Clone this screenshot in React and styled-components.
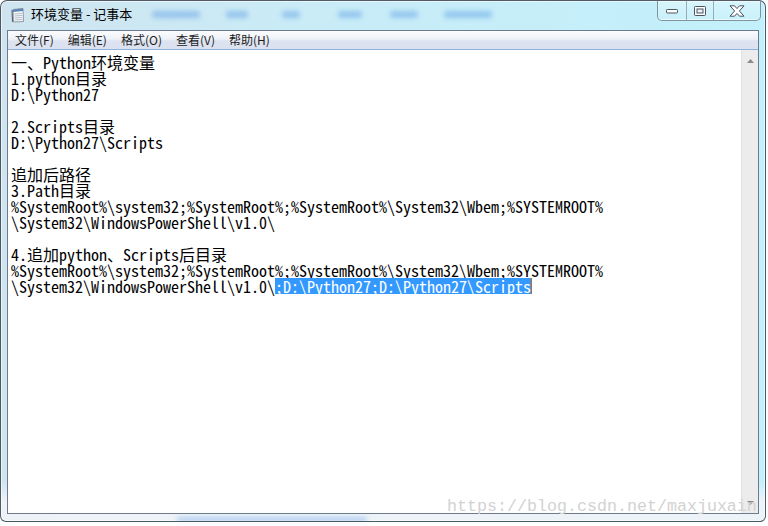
import React from 'react';
import styled, { createGlobalStyle } from 'styled-components';

const GlobalStyle = createGlobalStyle`
  html, body {
    margin: 0;
    padding: 0;
    background: #ffffff;
  }
  body {
    width: 768px;
    height: 526px;
    overflow: hidden;
  }
`;

const Page = styled.div`
  position: relative;
  width: 768px;
  height: 526px;
  background: #ffffff;
`;

const Window = styled.div`
  width: 766px;
  height: 522px;
  box-sizing: border-box;
  border: 1px solid rgba(38, 48, 60, 0.78);
  border-radius: 7px 7px 6px 6px;
  background:
    linear-gradient(to bottom, rgba(255,255,255,0) 0, rgba(255,255,255,0) 480px, rgba(240,244,248,0.9) 500px),
    linear-gradient(to right, #cfe4ef 0%, #c9ecf7 40%, #c2f0fb 100%);
  box-shadow: inset 0 0 0 1px rgba(255, 255, 255, 0.55);
  display: flex;
  flex-direction: column;
  overflow: hidden;
`;

const TitleBar = styled.div`
  height: 29px;
  display: flex;
  align-items: flex-start;
  padding-left: 9px;
  flex-shrink: 0;
`;

const AppIcon = styled.svg`
  margin-top: 6px;
  flex-shrink: 0;
`;

const Title = styled.div`
  margin-left: 5px;
  line-height: 26px;
  font-family: "Noto Sans CJK SC", "Noto Sans", sans-serif;
  font-size: 13px;
  color: #000000;
  white-space: pre;
`;

const Blurs = styled.div`
  display: flex;
  align-items: center;
  height: 27px;
  margin-left: 20px;
`;

const Blob = styled.div`
  width: ${p => p.w}px;
  margin-left: ${p => p.gap}px;
  height: ${p => p.h || 7}px;
  border-radius: 3px;
  background: rgba(70, 140, 225, ${p => p.alpha || 0.4});
  filter: blur(2.5px);
  flex-shrink: 0;
`;

const Captions = styled.div`
  margin-left: auto;
  margin-right: 4px;
  display: flex;
  height: 19px;
  border: 1px solid rgba(60, 70, 82, 0.55);
  border-top: none;
  border-radius: 0 0 5px 5px;
  overflow: hidden;
  background: linear-gradient(to bottom, rgba(255,255,255,0.35), rgba(255,255,255,0.1));
  box-shadow: inset 0 -1px 0 rgba(255,255,255,0.6);
`;

const CapButton = styled.div`
  width: ${p => p.w}px;
  height: 19px;
  display: flex;
  align-items: center;
  justify-content: center;
  border-left: ${p => (p.first ? 'none' : '1px solid rgba(60, 70, 82, 0.4)')};
`;

const Client = styled.div`
  flex: 1;
  margin: 0 6px;
  border: 1px solid #6c7b8e;
  display: flex;
  flex-direction: column;
  min-height: 0;
`;

const BottomFrame = styled.div`
  height: 7px;
  flex-shrink: 0;
  display: flex;
  align-items: flex-end;
`;

const MenuBar = styled.div`
  height: 18px;
  flex-shrink: 0;
  display: flex;
  align-items: center;
  background: linear-gradient(to bottom, #fbfcfe 0%, #eef1f8 45%, #dde3f0 55%, #dbe1ee 100%);
  font-family: "Noto Sans CJK SC", "Noto Sans", sans-serif;
  font-size: 12px;
  color: #1e1e1e;
`;

const MenuItem = styled.div`
  padding: 0 7px;
  line-height: 18px;
  white-space: pre;
`;

const EditArea = styled.div`
  flex: 1;
  display: flex;
  border-top: 1px solid #8fb3de;
  min-height: 0;
`;

const TextPane = styled.div`
  flex: 1;
  background: #ffffff;
  padding: 4px 3px;
  font-family: "Noto Sans Mono CJK SC", "Liberation Mono", "Noto Sans CJK SC", monospace;
  font-size: 16px;
  line-height: 16px;
  color: #000000;
  white-space: pre;
  overflow: hidden;
`;

const Line = styled.div`
  height: 16px;
  line-height: 16px;
`;

const Selection = styled.span`
  display: inline-block;
  height: 16px;
  line-height: 16px;
  vertical-align: top;
  background: #3399ff;
  color: #ffffff;
  box-shadow: 1px 0 0 #c26a1c;
`;

const ScrollBar = styled.div`
  width: 17px;
  flex-shrink: 0;
  background: #ececec;
  border-left: 1px solid #e2e2e2;
  box-sizing: border-box;
  display: flex;
  flex-direction: column;
  justify-content: space-between;
`;

const Arrow = styled.div`
  height: ${p => p.h}px;
  display: flex;
  align-items: center;
  justify-content: center;
`;

const Watermark = styled.div`
  position: absolute;
  left: 447px;
  top: 497px;
  font-family: "Liberation Mono", "DejaVu Sans Mono", monospace;
  font-size: 16.67px;
  line-height: 20px;
  color: #d2d2d2;
  white-space: pre;
`;

const lines = [
  '一、Python环境变量',
  '1.python目录',
  'D:\\Python27',
  '',
  '2.Scripts目录',
  'D:\\Python27\\Scripts',
  '',
  '追加后路径',
  '3.Path目录',
  '%SystemRoot%\\system32;%SystemRoot%;%SystemRoot%\\System32\\Wbem;%SYSTEMROOT%',
  '\\System32\\WindowsPowerShell\\v1.0\\',
  '',
  '4.追加python、Scripts后目录',
  '%SystemRoot%\\system32;%SystemRoot%;%SystemRoot%\\System32\\Wbem;%SYSTEMROOT%',
];

const blobs = [
  { gap: 0, w: 48 },
  { gap: 26, w: 22 },
  { gap: 34, w: 18 },
  { gap: 38, w: 24 },
  { gap: 28, w: 28 },
  { gap: 26, w: 48 },
];

function NotepadIcon() {
  return (
    <AppIcon width="16" height="16" viewBox="0 0 16 16">
      <path d="M3 2.5 L13 1.5 L13.5 14.5 L3.5 15 Z" fill="#f4f6f8" stroke="#7a8594" strokeWidth="0.8" />
      <path d="M3 2.5 L13 1.5 L13.1 4 L3.1 5 Z" fill="#5b86b8" />
      <path d="M4.5 7 L12 6.4 M4.6 9 L12.1 8.4 M4.7 11 L12.2 10.4 M4.8 13 L12.3 12.4" stroke="#9aa7b6" strokeWidth="0.7" />
      <path d="M2 3 L2.5 14.8" stroke="#4a5563" strokeWidth="1" />
    </AppIcon>
  );
}

function App() {
  return (
    <>
      <GlobalStyle />
      <Page>
        <Window>
          <TitleBar>
            <NotepadIcon />
            <Title>环境变量 - 记事本</Title>
            <Blurs>
              {blobs.map((b, i) => (
                <Blob key={i} w={b.w} gap={i === 0 ? 0 : b.gap} />
              ))}
            </Blurs>
            <Captions>
              <CapButton w={28} first>
                <svg width="12" height="6" viewBox="0 0 12 6">
                  <rect x="0.5" y="1.5" width="11" height="3.5" rx="0.8" fill="#ffffff" stroke="#4a5360" strokeWidth="1" />
                </svg>
              </CapButton>
              <CapButton w={26}>
                <svg width="12" height="10" viewBox="0 0 12 10">
                  <rect x="0.5" y="0.5" width="11" height="9" rx="0.8" fill="#ffffff" stroke="#4a5360" strokeWidth="1" />
                  <rect x="3" y="3" width="6" height="4" fill="#eef2f6" stroke="#4a5360" strokeWidth="1" />
                </svg>
              </CapButton>
              <CapButton w={46}>
                <svg width="18" height="12" viewBox="0 0 18 12">
                  <path
                    d="M2 0.8 L6.5 0.8 L9 3.6 L11.5 0.8 L16 0.8 L11.4 6 L16 11.2 L11.5 11.2 L9 8.4 L6.5 11.2 L2 11.2 L6.6 6 Z"
                    fill="#ffffff"
                    stroke="#4a5360"
                    strokeWidth="1"
                    strokeLinejoin="round"
                  />
                </svg>
              </CapButton>
            </Captions>
          </TitleBar>
          <Client>
            <MenuBar>
              <MenuItem>文件(F)</MenuItem>
              <MenuItem>编辑(E)</MenuItem>
              <MenuItem>格式(O)</MenuItem>
              <MenuItem>查看(V)</MenuItem>
              <MenuItem>帮助(H)</MenuItem>
            </MenuBar>
            <EditArea>
              <TextPane>
                {lines.map((l, i) => (
                  <Line key={i}>{l}</Line>
                ))}
                <Line>
                  {'\\System32\\WindowsPowerShell\\v1.0\\'}
                  <Selection>{';D:\\Python27;D:\\Python27\\Scripts'}</Selection>
                </Line>
              </TextPane>
              <ScrollBar>
                <Arrow h={21}>
                  <svg width="7" height="4" viewBox="0 0 7 4">
                    <path d="M0 4 L3.5 0 L7 4 Z" fill="#8a8a8a" />
                  </svg>
                </Arrow>
                <Arrow h={20}>
                  <svg width="7" height="4" viewBox="0 0 7 4">
                    <path d="M0 0 L3.5 4 L7 0 Z" fill="#8a8a8a" />
                  </svg>
                </Arrow>
              </ScrollBar>
            </EditArea>
          </Client>
          <BottomFrame>
            <Blob w={190} gap={176} h={3} alpha={0.55} />
          </BottomFrame>
        </Window>
        <Watermark>https://blog.csdn.net/maxjuxain</Watermark>
      </Page>
    </>
  );
}

export default App;
